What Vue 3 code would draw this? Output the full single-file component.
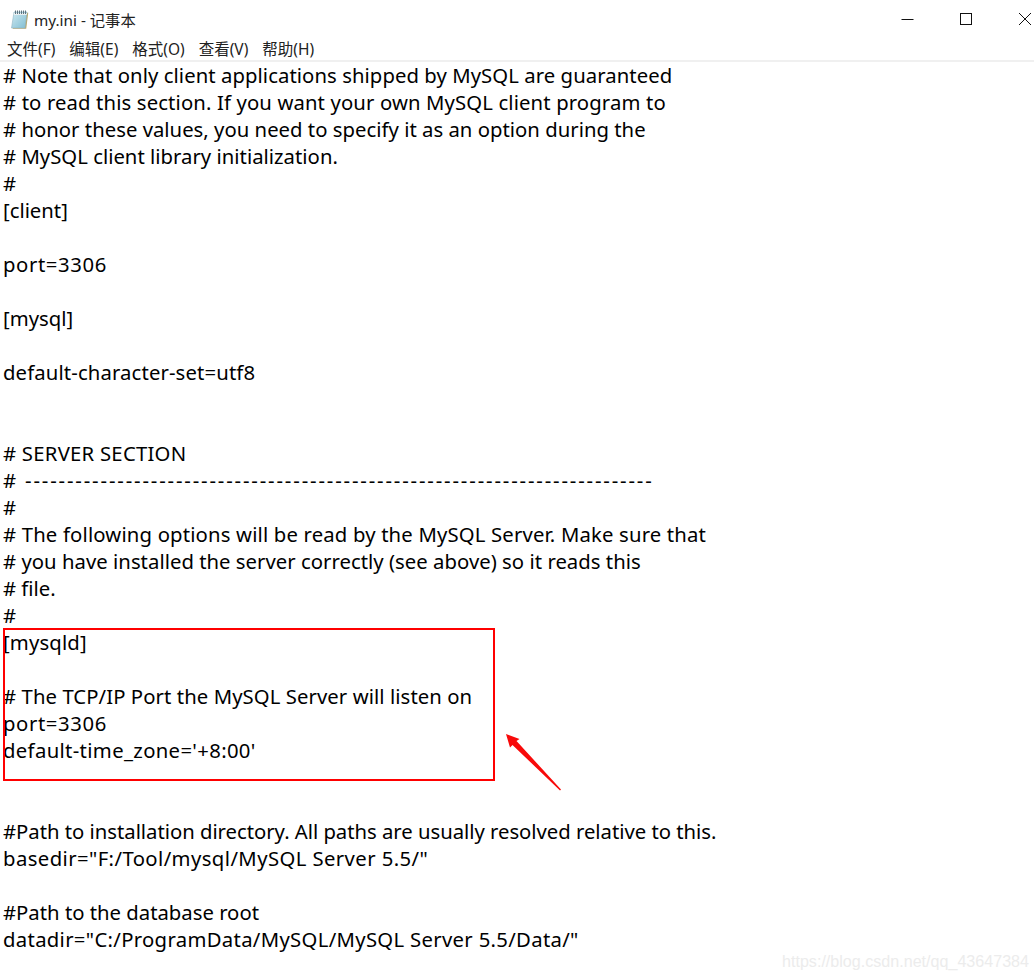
<script setup>
const lines = [
  ['# Note that only client applications shipped by MySQL are guaranteed', 0.07],
  ['# to read this section. If you want your own MySQL client program to', 0.13],
  ['# honor these values, you need to specify it as an option during the', 0.02],
  ['# MySQL client library initialization.', 0.02],
  ['#', 0],
  ['[client]', 0],
  ['', 0],
  ['port=3306', 0.6],
  ['', 0],
  ['[mysql]', 0],
  ['', 0],
  ['default-character-set=utf8', 0.13],
  ['', 0],
  ['', 0],
  ['# SERVER SECTION', 0.25],
  ['# ' + '-'.repeat(75), 1.85],
  ['#', 0],
  ['# The following options will be read by the MySQL Server. Make sure that', 0.17],
  ['# you have installed the server correctly (see above) so it reads this', 0.03],
  ['# file.', 0],
  ['#', 0],
  ['[mysqld]', 0.15],
  ['', 0],
  ['# The TCP/IP Port the MySQL Server will listen on', 0.08],
  ['port=3306', 0.6],
  ["default-time_zone='+8:00'", 0.34],
  ['', 0],
  ['', 0],
  ['#Path to installation directory. All paths are usually resolved relative to this.', -0.02],
  ['basedir="F:/Tool/mysql/MySQL Server 5.5/"', 0.41],
  ['', 0],
  ['#Path to the database root', 0],
  ['datadir="C:/ProgramData/MySQL/MySQL Server 5.5/Data/"', 0.32],
]
const menus = ['文件(F)', '编辑(E)', '格式(O)', '查看(V)', '帮助(H)']
</script>

<template>
  <div class="window">
    <header class="titlebar">
      <div class="title">
        <svg class="app-icon" width="20" height="22" viewBox="0 0 20 22">
          <defs>
            <linearGradient id="page" x1="0" y1="0" x2="1" y2="1">
              <stop offset="0" stop-color="#cfe9f1" />
              <stop offset="1" stop-color="#7fbdd2" />
            </linearGradient>
          </defs>
          <path d="M5 4 L18 4 L16 20 L2.5 20 Z" fill="#b8a56a" transform="translate(1.2 0.8)" />
          <path d="M5 4 L18 4 L16 20 L2.5 20 Z" fill="url(#page)" stroke="#8fb4c2" stroke-width="0.6" />
          <path d="M5 5 L18 5 L17.7 7 L4.7 7 Z" fill="#e8eef0" />
          <path d="M6.5 2.5v3.5M8.5 2.5v3.5M10.5 2.5v3.5M12.5 2.5v3.5M14.5 2.5v3.5M16.5 2.5v3.5" stroke="#5f7480" stroke-width="1" />
        </svg>
        <span>my.ini - 记事本</span>
      </div>
      <div class="controls">
        <svg width="14" height="14" viewBox="0 0 14 14"><path d="M1.5 7.5h12" stroke="#111" fill="none" /></svg>
        <svg width="14" height="14" viewBox="0 0 14 14"><rect x="1.5" y="1.5" width="11" height="11" stroke="#111" fill="none" /></svg>
        <svg width="14" height="14" viewBox="0 0 14 14"><path d="M1 1l12 12M13 1L1 13" stroke="#111" fill="none" /></svg>
      </div>
    </header>
    <nav class="menubar">
      <span v-for="m in menus" :key="m">{{ m }}</span>
    </nav>
    <main class="editor">
      <div
        v-for="(line, i) in lines"
        :key="i"
        class="line"
        :style="{ letterSpacing: line[1] + 'px' }"
      >{{ line[0] }}</div>
    </main>
    <div class="highlight"></div>
    <svg class="arrow" width="70" height="70" viewBox="0 0 70 70">
      <path d="M6 6 L19.5 11 L16.5 13 L61 61.5 L60 62.5 L12.5 17 L10 19.5 Z" fill="#f80a0a" />
    </svg>
    <div class="watermark">https://blog.csdn.net/qq_43647384</div>
  </div>
</template>

<style scoped>
.window {
  position: relative;
  width: 1034px;
  height: 978px;
  overflow: hidden;
  background: #fff;
  color: #000;
  font-family: "Noto Sans", "Noto Sans CJK SC", sans-serif;
}
.titlebar {
  display: flex;
  justify-content: space-between;
  align-items: center;
  height: 37px;
}
.title {
  display: flex;
  align-items: center;
  gap: 5px;
  padding-left: 9px;
  font-size: 15.3px;
  color: #222;
}
.controls {
  display: flex;
  gap: 45px;
  padding-right: 2px;
}
.menubar {
  display: flex;
  gap: 14px;
  height: 25px;
  padding-left: 7px;
  align-items: center;
  font-size: 15.5px;
  line-height: 24px;
  color: #222;
  border-bottom: 2px solid #f0f0f0;
  box-sizing: border-box;
}
.editor {
  font-size: 20.3px;
  line-height: 27px;
  padding-left: 3px;
  white-space: pre;
}
.line {
  height: 27px;
}
.highlight {
  position: absolute;
  left: 3px;
  top: 628px;
  width: 492px;
  height: 153px;
  border: 2px solid #f00;
  box-sizing: border-box;
}
.arrow {
  position: absolute;
  left: 500px;
  top: 728px;
}
.watermark {
  position: absolute;
  right: 5px;
  bottom: 7px;
  font-family: "Liberation Sans", sans-serif;
  font-size: 16.1px;
  color: #ececec;
}
</style>
